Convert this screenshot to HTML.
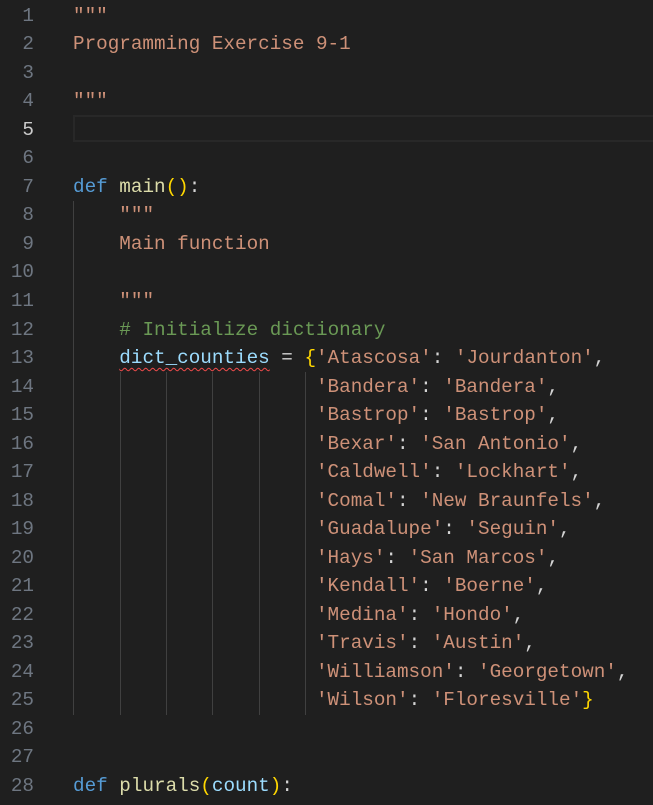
<!DOCTYPE html>
<html><head><meta charset="utf-8"><style>
html,body{margin:0;padding:0;background:#1f1f1f;width:653px;height:805px;overflow:hidden}
.ed{position:relative;width:653px;height:805px;font-family:"Liberation Mono",monospace;font-size:19.3px}
.ln{position:absolute;left:0;width:34px;text-align:right;color:#6e7681;height:28.52px;line-height:28.52px}
.ln.cur{color:#cccccc}
.c{position:absolute;left:73px;white-space:pre;height:28.52px;line-height:28.52px;color:#d4d4d4}
.s{color:#ce9178}.k{color:#569cd6}.f{color:#dcdcaa}.p{color:#ffd700}.v{color:#9cdcfe}.cm{color:#6a9955}.w{color:#cccccc}
.g{position:absolute;width:1px;background:#404040}
.hl{position:absolute;left:73px;right:-2px;top:115px;height:27px;border:2px solid #282828;box-sizing:border-box}
.sq{text-decoration:underline wavy #f14c4c;text-underline-offset:4px;text-decoration-thickness:1px}
.p2{color:#da70d6}
</style></head><body><div class="ed">
<div class="hl"></div>
<div class="g" style="left:73px;top:201px;height:514px"></div>
<div class="g" style="left:120px;top:372px;height:343px"></div>
<div class="g" style="left:166px;top:372px;height:343px"></div>
<div class="g" style="left:212px;top:372px;height:343px"></div>
<div class="g" style="left:259px;top:372px;height:343px"></div>
<div class="g" style="left:305px;top:372px;height:343px"></div>
<div id="L"></div>
</div>
<script>
var lines=[
'<span class="s">"""</span>',
'<span class="s">Programming Exercise 9-1</span>',
'',
'<span class="s">"""</span>',
'',
'',
'<span class="k">def</span> <span class="f">main</span><span class="p">()</span>:',
'    <span class="s">"""</span>',
'    <span class="s">Main function</span>',
'',
'    <span class="s">"""</span>',
'    <span class="cm"># Initialize dictionary</span>',
'    <span class="v sq">dict_counties</span> = <span class="p">{</span><span class="s">\'Atascosa\'</span>: <span class="s">\'Jourdanton\'</span>,',
'                     <span class="s">\'Bandera\'</span>: <span class="s">\'Bandera\'</span>,',
'                     <span class="s">\'Bastrop\'</span>: <span class="s">\'Bastrop\'</span>,',
'                     <span class="s">\'Bexar\'</span>: <span class="s">\'San Antonio\'</span>,',
'                     <span class="s">\'Caldwell\'</span>: <span class="s">\'Lockhart\'</span>,',
'                     <span class="s">\'Comal\'</span>: <span class="s">\'New Braunfels\'</span>,',
'                     <span class="s">\'Guadalupe\'</span>: <span class="s">\'Seguin\'</span>,',
'                     <span class="s">\'Hays\'</span>: <span class="s">\'San Marcos\'</span>,',
'                     <span class="s">\'Kendall\'</span>: <span class="s">\'Boerne\'</span>,',
'                     <span class="s">\'Medina\'</span>: <span class="s">\'Hondo\'</span>,',
'                     <span class="s">\'Travis\'</span>: <span class="s">\'Austin\'</span>,',
'                     <span class="s">\'Williamson\'</span>: <span class="s">\'Georgetown\'</span>,',
'                     <span class="s">\'Wilson\'</span>: <span class="s">\'Floresville\'</span><span class="p">}</span>',
'',
'',
'<span class="k">def</span> <span class="f">plurals</span><span class="p">(</span><span class="v">count</span><span class="p">)</span>:'
];
var h='';
for(var i=0;i<lines.length;i++){var t=(1.8+i*28.52).toFixed(2);
h+='<div class="ln'+(i==4?' cur':'')+'" style="top:'+t+'px">'+(i+1)+'</div>';
h+='<div class="c" style="top:'+t+'px">'+lines[i]+'</div>';}
document.getElementById('L').innerHTML=h;
</script>
</body></html>
